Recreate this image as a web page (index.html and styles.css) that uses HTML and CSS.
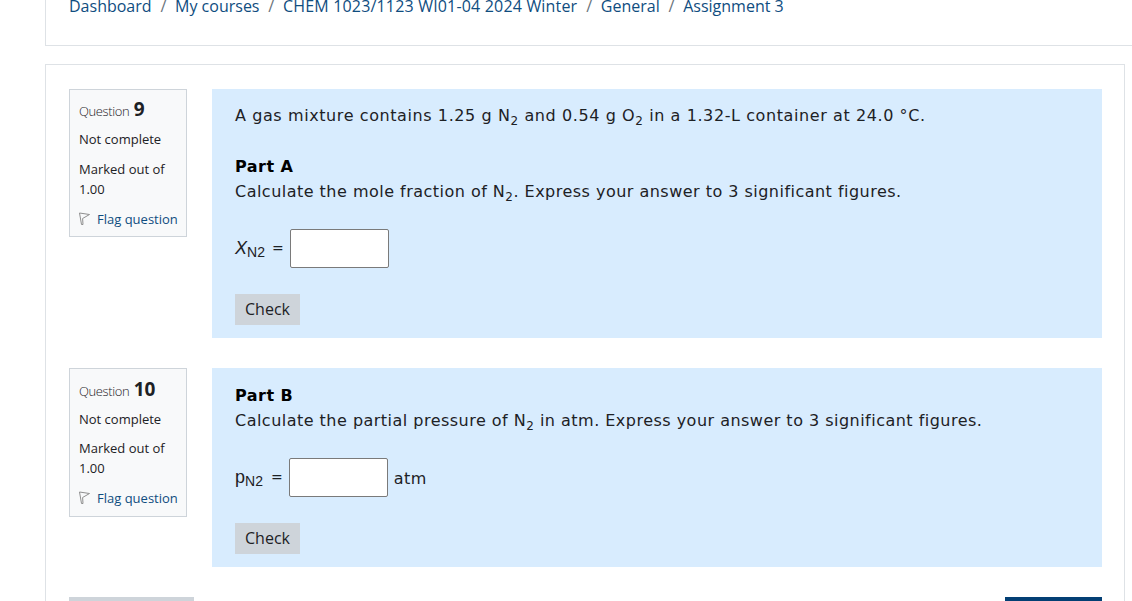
FILE: index.html
```html
<!DOCTYPE html>
<html lang="en">
<head>
<meta charset="UTF-8">
<title>Assignment 3</title>
<link rel="stylesheet" href="styles.css">
</head>
<body>
<div class="page-header">
    <ol class="breadcrumb">
        <li><a href="#">Dashboard</a></li>
        <li class="sep">/</li>
        <li><a href="#">My courses</a></li>
        <li class="sep">/</li>
        <li class="course"><a href="#">CHEM 1023/1123 WI01-04 2024 Winter</a></li>
        <li class="sep">/</li>
        <li><a href="#">General</a></li>
        <li class="sep">/</li>
        <li><a href="#">Assignment 3</a></li>
    </ol>
</div>

<div class="main-card">
    <div class="que first">
        <div class="info">
            <h3 class="no">Question <span class="qno">9</span></h3>
            <div class="state">Not complete</div>
            <div class="grade">Marked out of 1.00</div>
            <div class="flag">
                <svg class="flag-icon" width="14" height="15" viewBox="0 0 14 15"><path d="M1.5 1 L11.5 2.5 L4.6 6.5 L5 12.5 L3.5 12.5 Z" fill="none" stroke="#8f8f8f" stroke-width="1"/></svg>
                <a href="#">Flag question</a>
            </div>
        </div>
        <div class="content">
            <p class="intro">A gas mixture contains 1.25 g N<sub>2</sub> and 0.54 g O<sub>2</sub> in a 1.32-L container at 24.0 °C.</p>
            <p class="part"><b>Part A</b><br>Calculate the mole fraction of N<sub>2</sub>. Express your answer to 3 significant figures.</p>
            <div class="answer">
                <span class="sym"><i>X</i><span class="low">N2</span></span>
                <span class="eq">=</span>
                <input type="text" class="ans-input">
            </div>
            <input type="button" class="check" value="Check">
        </div>
    </div>

    <div class="que second">
        <div class="info">
            <h3 class="no">Question <span class="qno">10</span></h3>
            <div class="state">Not complete</div>
            <div class="grade">Marked out of 1.00</div>
            <div class="flag">
                <svg class="flag-icon" width="14" height="15" viewBox="0 0 14 15"><path d="M1.5 1 L11.5 2.5 L4.6 6.5 L5 12.5 L3.5 12.5 Z" fill="none" stroke="#8f8f8f" stroke-width="1"/></svg>
                <a href="#">Flag question</a>
            </div>
        </div>
        <div class="content">
            <p class="part"><b>Part B</b><br>Calculate the partial pressure of N<sub>2</sub> in atm. Express your answer to 3 significant figures.</p>
            <div class="answer">
                <span class="sym">p<span class="low">N2</span></span>
                <span class="eq">=</span>
                <input type="text" class="ans-input">
                <span class="unit">atm</span>
            </div>
            <input type="button" class="check" value="Check">
        </div>
    </div>

    <div class="nav-row">
        <div class="btn-prev"></div>
        <div class="btn-next"></div>
    </div>
</div>
</body>
</html>
```

FILE: styles.css
```css
html, body {
    height: 601px;
    overflow: hidden;
}
body {
    margin: 0;
    background-color: #fff;
    font-family: "Open Sans", "Noto Sans", sans-serif;
    font-size: 15px;
    color: #1d2125;
}
a {
    color: #0f4d7f;
    text-decoration: none;
}
.page-header {
    margin: -25px -40px 0 45px;
    height: 71px;
    box-sizing: border-box;
    border: 1px solid #dee2e6;
    padding-top: 18px;
    padding-left: 23px;
}
.breadcrumb {
    display: flex;
    gap: 8.8px;
    list-style: none;
    margin: 0;
    padding: 0;
    font-size: 16px;
    line-height: 24px;
}
.breadcrumb .sep {
    color: #6a737b;
}
.breadcrumb .course {
    letter-spacing: 0.18px;
}
.main-card {
    margin: 18px 0 0 45px;
    width: 1080px;
    height: 620px;
    box-sizing: border-box;
    border: 1px solid #dee2e6;
    padding: 24px 22px 0 23px;
}
.que {
    display: flex;
    align-items: flex-start;
    gap: 25px;
}
.que.first {
    margin-bottom: 30px;
}
.info {
    width: 118px;
    flex-shrink: 0;
    box-sizing: border-box;
    background-color: #f8f9fa;
    border: 1px solid #ced4da;
    padding: 7px 9px;
    font-size: 13px;
    line-height: 20px;
    color: #1d2125;
}
.no {
    margin: 0 0 6px;
    font-size: 13px;
    font-weight: 300;
    line-height: 24px;
    letter-spacing: -0.4px;
}
.qno {
    margin-left: 1.5px;
    font-size: 19px;
    font-weight: 700;
    letter-spacing: 0;
}
.state {
    margin-bottom: 10px;
}
.grade {
    margin-bottom: 10px;
}
.flag {
    display: flex;
    align-items: center;
    gap: 5px;
    white-space: nowrap;
}
.flag-icon {
    flex-shrink: 0;
    margin-left: -1px;
}
.second .info {
    padding-top: 8px;
    padding-bottom: 8px;
}
.second .state {
    margin-bottom: 9px;
}
.content {
    flex: 1;
    box-sizing: border-box;
    background-color: #d8ecfe;
    padding: 15px 23px 13px;
    font-family: "DejaVu Sans", Verdana, sans-serif;
    font-size: 16px;
    letter-spacing: 0.48px;
    line-height: 25px;
    color: #1d2125;
}
.first .content {
    padding-top: 14px;
}
.content p {
    margin: 0;
}
.content sub {
    font-size: 12px;
    line-height: 0;
}
.content b {
    color: #000;
}
.intro {
    margin-bottom: 26px !important;
    letter-spacing: 0.59px;
}
.part {
    margin-bottom: 25px !important;
}
.answer {
    display: flex;
    align-items: center;
    height: 39px;
    margin-bottom: 26px;
    font-family: "Liberation Sans", Arial, sans-serif;
    font-size: 18px;
    letter-spacing: 0;
}
.sym {
    margin-right: 7px;
}
.second .sym {
    margin-right: 8px;
}
.low {
    font-size: 14px;
    position: relative;
    top: 3px;
}
.eq {
    margin-right: 6px;
    font-family: "DejaVu Sans", sans-serif;
    font-size: 14px;
}
.ans-input {
    width: 99px;
    height: 39px;
    box-sizing: border-box;
    border: 1px solid #7a7a7a;
    border-radius: 2px;
    background-color: #fff;
    padding: 0;
}
.unit {
    margin-left: 6px;
    font-family: "DejaVu Sans", sans-serif;
    font-size: 16px;
    letter-spacing: 0.5px;
    position: relative;
    top: 1px;
}
.check {
    display: block;
    width: 65px;
    height: 31px;
    border: none;
    padding: 0 0 2px;
    background-color: #ced4da;
    color: #1d2125;
    font-family: "Open Sans", "Noto Sans", sans-serif;
    font-size: 16px;
}
.nav-row {
    display: flex;
    justify-content: space-between;
    margin-top: 30px;
}
.btn-prev {
    width: 125px;
    height: 38px;
    background-color: #ced4da;
}
.btn-next {
    width: 97px;
    height: 38px;
    background-color: #033f74;
}
```
